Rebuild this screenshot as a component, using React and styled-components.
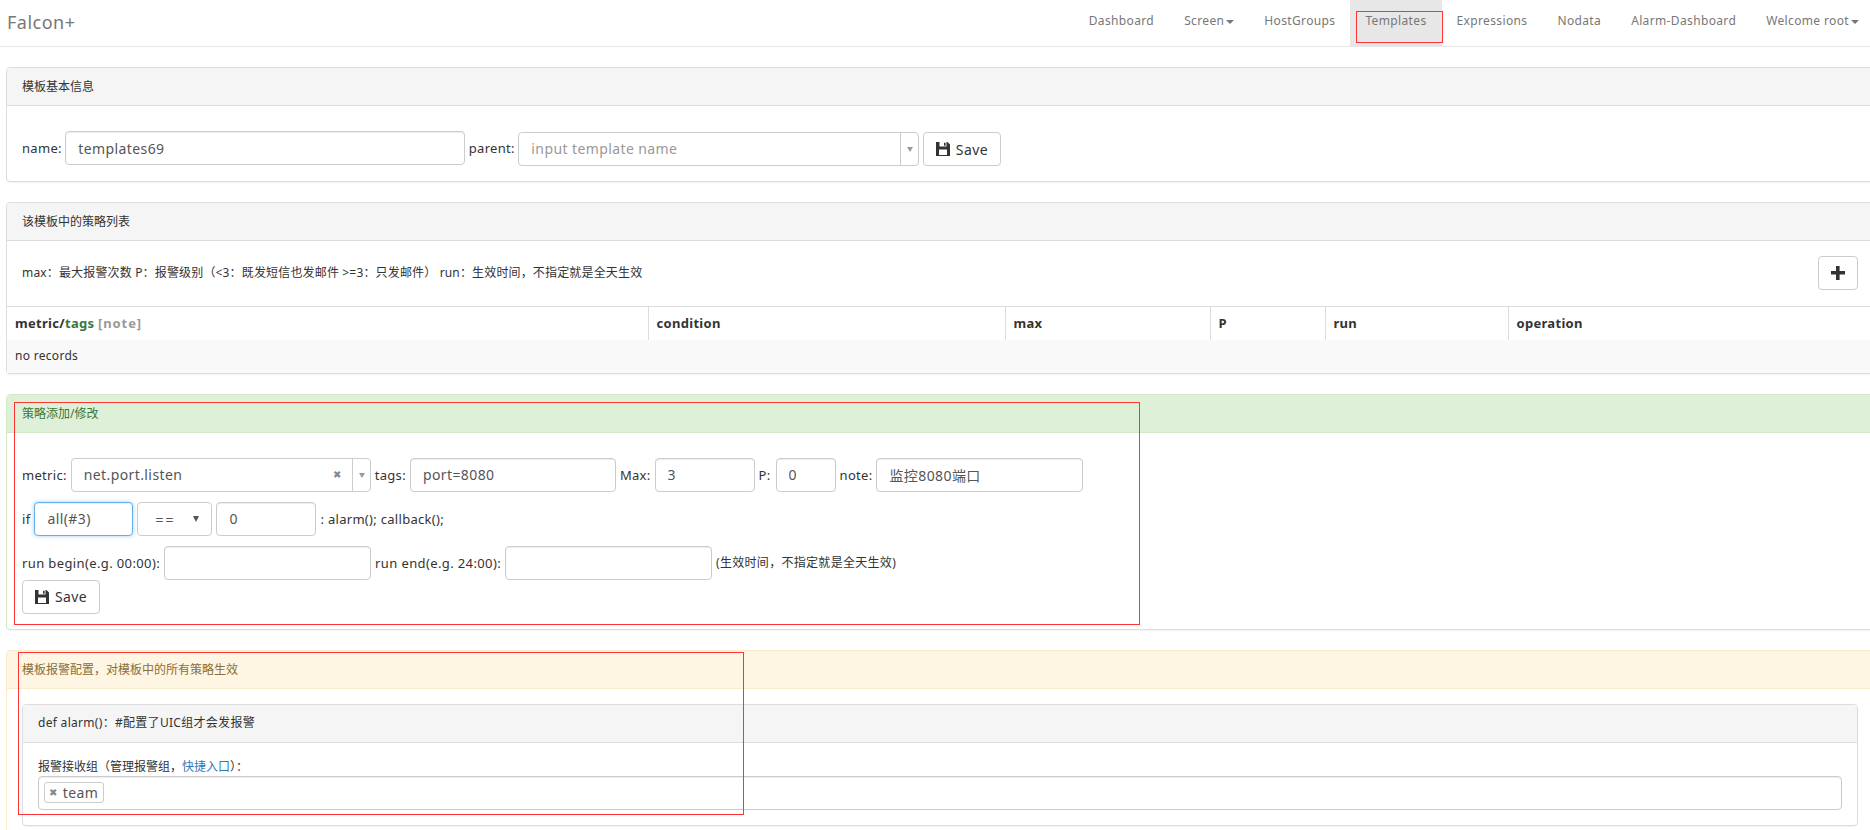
import React from "react";
import styled, { createGlobalStyle } from "styled-components";

const SANS = `"Noto Sans", "Noto Sans CJK SC", sans-serif`;

const GlobalStyle = createGlobalStyle`
  html, body {
    margin: 0;
    overflow: hidden;
  }
  body {
    background: #fff;
    color: #333;
    font-family: ${SANS};
    font-size: 12px;
    line-height: 18px;
  }
  * {
    box-sizing: border-box;
  }
`;

const NAV_ITEMS = [
  { label: "Dashboard" },
  { label: "Screen", caret: true },
  { label: "HostGroups" },
  { label: "Templates", active: true },
  { label: "Expressions" },
  { label: "Nodata" },
  { label: "Alarm-Dashboard" },
  { label: "Welcome root", caret: true },
];

const COLUMNS = [
  { label: "condition", width: 357 },
  { label: "max", width: 205 },
  { label: "P", width: 115 },
  { label: "run", width: 183 },
  { label: "operation" },
];

const SaveIcon = () => (
  <svg width="14" height="14" viewBox="0 0 14 14" aria-hidden="true">
    <path
      fill="#333"
      fillRule="evenodd"
      d="M0 0h11.5L14 2.5V14H0zM3.5 0v4.5h7V0zM8 .8h1.6v3H8zM3 7.5h8V13H3z"
    />
  </svg>
);

const PlusIcon = () => (
  <svg width="14" height="14" viewBox="0 0 14 14" aria-hidden="true">
    <path fill="#333" d="M5 0h3.6v5H14v3.6H8.6V14H5V8.6H0V5h5z" />
  </svg>
);

const SaveButton = () => (
  <Button>
    <SaveIcon />
    Save
  </Button>
);

const Metric = ({ value, placeholder, clearable, width }) => (
  <Combo $width={width}>
    {value ? <ComboValue>{value}</ComboValue> : <ComboHint>{placeholder}</ComboHint>}
    {clearable && <ComboClear>✖</ComboClear>}
    <ComboArrow />
  </Combo>
);

const App = () => (
  <Page>
    <GlobalStyle />
    <Navbar>
      <Brand>Falcon+</Brand>
      <NavList>
        {NAV_ITEMS.map((item) => (
          <NavLink key={item.label} $active={item.active}>
            {item.label}
            {item.caret && <NavCaret />}
            {item.active && <TemplatesMark />}
          </NavLink>
        ))}
      </NavList>
    </Navbar>

    <Content>
      <Panel>
        <PanelHeading>模板基本信息</PanelHeading>
        <PanelBody $top={25}>
          <BasicRow>
            <FieldLabel>name:</FieldLabel>
            <TextInput $width={400} defaultValue="templates69" />
            <FieldLabel>parent:</FieldLabel>
            <Metric placeholder="input template name" width={401} />
            <SaveButton />
          </BasicRow>
        </PanelBody>
      </Panel>

      <Panel>
        <PanelHeading>该模板中的策略列表</PanelHeading>
        <PanelBody $bottom={16}>
          <LegendRow>
            <LegendText>
              max：最大报警次数 P：报警级别（&lt;3：既发短信也发邮件 &gt;=3：只发邮件） run：生效时间，不指定就是全天生效
            </LegendText>
            <IconButton>
              <PlusIcon />
            </IconButton>
          </LegendRow>
        </PanelBody>
        <Table>
          <thead>
            <tr>
              <HeadCell $width={641}>
                metric/<TagsText>tags</TagsText> <NoteText>[note]</NoteText>
              </HeadCell>
              {COLUMNS.map((col) => (
                <HeadCell key={col.label} $width={col.width}>
                  {col.label}
                </HeadCell>
              ))}
            </tr>
          </thead>
          <tbody>
            <tr>
              <BodyCell colSpan={6}>no records</BodyCell>
            </tr>
          </tbody>
        </Table>
      </Panel>

      <Panel $tone="success">
        <PolicyMark />
        <PanelHeading $tone="success">策略添加/修改</PanelHeading>
        <PanelBody $top={25}>
          <FormStack>
            <FormRow>
              <FieldLabel>metric:</FieldLabel>
              <Metric value="net.port.listen" clearable width={300} />
              <FieldLabel>tags:</FieldLabel>
              <TextInput $width={206} defaultValue="port=8080" />
              <FieldLabel>Max:</FieldLabel>
              <TextInput $width={100} defaultValue="3" />
              <PLabel>P:</PLabel>
              <TextInput $width={60} defaultValue="0" />
              <FieldLabel>note:</FieldLabel>
              <TextInput $width={207} defaultValue="监控8080端口" />
            </FormRow>
            <FormRow>
              <FieldLabel>if</FieldLabel>
              <TextInput $width={99} $focused defaultValue="all(#3)" />
              <SelectBox>
                ==
                <SelectCaret />
              </SelectBox>
              <TextInput $width={100} defaultValue="0" />
              <FieldLabel>: alarm(); callback();</FieldLabel>
            </FormRow>
            <FormRow>
              <RunLabel>run begin(e.g. 00:00):</RunLabel>
              <TextInput $width={207} />
              <RunLabel>run end(e.g. 24:00):</RunLabel>
              <TextInput $width={207} />
              <HintLabel>(生效时间，不指定就是全天生效)</HintLabel>
            </FormRow>
          </FormStack>
          <SaveButton />
        </PanelBody>
      </Panel>

      <Panel $tone="warning">
        <AlarmMark />
        <PanelHeading $tone="warning">模板报警配置，对模板中的所有策略生效</PanelHeading>
        <PanelBody>
          <Panel $flush>
            <InnerHeading>def alarm()：#配置了UIC组才会发报警</InnerHeading>
            <PanelBody>
              <GroupLabel>
                报警接收组（管理报警组，<GroupLink>快捷入口</GroupLink>）：
              </GroupLabel>
              <TagBox>
                <Tag>
                  <TagRemove>✖</TagRemove>
                  team
                </Tag>
              </TagBox>
            </PanelBody>
          </Panel>
        </PanelBody>
      </Panel>
    </Content>
  </Page>
);

const TONES = {
  default: { border: "#ddd", bg: "#f5f5f5", text: "#333" },
  success: { border: "#d6e9c6", bg: "#dff0d8", text: "#3c763d" },
  warning: { border: "#faebcc", bg: "#fef6e2", text: "#8a6d3b" },
};

const toneOf = (props) => TONES[props.$tone] || TONES.default;

const Page = styled.div`
  height: 830px;
  margin-right: -4px;
  overflow: hidden;
`;

const Navbar = styled.nav`
  display: flex;
  justify-content: space-between;
  height: 47px;
  border-bottom: 1px solid #e7e7e7;
`;

const Brand = styled.a`
  padding: 12px 0 0 7px;
  color: #777;
  font-size: 18px;
  letter-spacing: 0.5px;
  line-height: 20px;
`;

const NavList = styled.div`
  display: flex;
`;

const NavLink = styled.a`
  position: relative;
  display: flex;
  align-items: flex-start;
  height: 46px;
  padding: 12px 15px 0;
  color: #777;
  background: ${(props) => (props.$active ? "#e7e7e7" : "transparent")};
  font-size: 12px;
  letter-spacing: 0.36px;
  line-height: 18px;
`;

const NavCaret = styled.span`
  align-self: center;
  margin: -14px 0 0 2px;
  border-top: 4px solid #777;
  border-left: 4px solid transparent;
  border-right: 4px solid transparent;
`;

const TemplatesMark = styled.span`
  position: absolute;
  top: 11px;
  left: 6px;
  width: 87px;
  height: 32px;
  border: 1px solid #f33;
`;

const Content = styled.main`
  padding: 20px 0 0 6px;
`;

const Panel = styled.section`
  position: relative;
  margin-bottom: ${(props) => (props.$flush ? "0" : "20px")};
  background: #fff;
  border: 1px solid ${(props) => toneOf(props).border};
  border-radius: 4px;
  box-shadow: 0 1px 1px rgba(0, 0, 0, 0.05);
`;

const PanelHeading = styled.div`
  height: 38px;
  padding: 10px 15px;
  color: ${(props) => toneOf(props).text};
  background: ${(props) => toneOf(props).bg};
  border-bottom: 1px solid ${(props) => toneOf(props).border};
  border-radius: 3px 3px 0 0;
`;

const InnerHeading = styled(PanelHeading)`
  padding-top: 9px;
  letter-spacing: 0.3px;
`;

const PanelBody = styled.div`
  padding: ${(props) => props.$top || 15}px 15px ${(props) => props.$bottom || 15}px;
`;

const FormStack = styled.div`
  display: flex;
  flex-direction: column;
  gap: 10px;
`;

const FormRow = styled.div`
  display: flex;
  align-items: center;
  gap: 4px;
`;

// the parent picker and its button sit a pixel lower than the name input
const BasicRow = styled(FormRow)`
  align-items: flex-start;
  gap: 3.5px;

  & > label {
    margin-top: 8px;
  }
  & > div,
  & > button {
    margin-top: 1px;
  }
`;

const LegendRow = styled.div`
  display: flex;
  align-items: center;
  justify-content: space-between;
`;

const LegendText = styled.span`
  letter-spacing: 0.16px;
`;

const FieldLabel = styled.label`
  font-size: 13px;
  letter-spacing: 0.3px;
  white-space: nowrap;
`;

const PLabel = styled(FieldLabel)`
  margin-right: 1px;
`;

const RunLabel = styled(FieldLabel)`
  letter-spacing: 0.38px;
`;

const HintLabel = styled.label`
  letter-spacing: 0.3px;
  white-space: nowrap;
`;

const TextInput = styled.input`
  width: ${(props) => props.$width}px;
  height: 34px;
  padding: 6px 12px;
  color: #555;
  background: #fff;
  border: 1px solid ${(props) => (props.$focused ? "#66afe9" : "#ccc")};
  border-radius: 4px;
  box-shadow: ${(props) =>
    props.$focused
      ? "inset 0 1px 1px rgba(0,0,0,.075), 0 0 4px rgba(102,175,233,.6)"
      : "inset 0 1px 1px rgba(0,0,0,.075)"};
  font-family: ${SANS};
  font-size: 14px;
  letter-spacing: 0.4px;
  outline: none;
`;

const Combo = styled.div`
  position: relative;
  display: flex;
  align-items: center;
  width: ${(props) => props.$width}px;
  height: 34px;
  padding: 0 0 0 12px;
  background: #fff;
  border: 1px solid #ccc;
  border-radius: 4px;
  font-size: 14px;
  letter-spacing: 0.4px;
`;

const ComboValue = styled.span`
  flex: 1;
  color: #555;
`;

const ComboHint = styled.span`
  flex: 1;
  color: #999;
`;

const ComboClear = styled.span`
  margin-right: 10px;
  color: #888;
  font-family: "DejaVu Sans", sans-serif;
  font-size: 10px;
`;

const ComboArrow = styled.span`
  position: relative;
  align-self: stretch;
  flex: none;
  width: 18px;
  border-left: 1px solid #ccc;

  &::after {
    content: "";
    position: absolute;
    top: 14px;
    left: 6px;
    border-top: 5px solid #999;
    border-left: 3px solid transparent;
    border-right: 3px solid transparent;
  }
`;

const SelectBox = styled.div`
  position: relative;
  width: 75px;
  height: 34px;
  padding: 0 0 0 17px;
  color: #555;
  background: #fff;
  border: 1px solid #ccc;
  border-radius: 4px;
  font-size: 14px;
  letter-spacing: 2px;
  line-height: 34px;
`;

const SelectCaret = styled.span`
  position: absolute;
  top: 13px;
  right: 12px;
  border-top: 6px solid #555;
  border-left: 3px solid transparent;
  border-right: 3px solid transparent;
`;

const Button = styled.button`
  display: inline-flex;
  align-items: center;
  gap: 6px;
  height: 34px;
  padding: 0 12px;
  color: #333;
  background: #fff;
  border: 1px solid #ccc;
  border-radius: 4px;
  font-family: ${SANS};
  font-size: 14px;
  letter-spacing: 0.4px;
`;

const IconButton = styled(Button)`
  justify-content: center;
  width: 40px;
  padding: 0;
`;

const Table = styled.table`
  width: 100%;
  border-collapse: collapse;
  table-layout: fixed;
`;

const HeadCell = styled.th`
  width: ${(props) => (props.$width ? `${props.$width}px` : "auto")};
  height: 33px;
  padding: 0 8px;
  border-top: 1px solid #ddd;
  border-left: 1px solid #ddd;
  text-align: left;
  font-size: 13px;
  font-weight: 700;
  letter-spacing: 0.3px;

  &:first-child {
    border-left: 0;
  }
`;

const TagsText = styled.span`
  color: #3c763d;
`;

const NoteText = styled.span`
  color: #999;
  letter-spacing: 0.9px;
`;

const BodyCell = styled.td`
  height: 33px;
  padding: 0 8px;
  background: #f9f9f9;
  letter-spacing: 0.3px;
`;

const GroupLabel = styled.div``;

const GroupLink = styled.a`
  color: #337ab7;
`;

const TagBox = styled.div`
  display: flex;
  align-items: center;
  height: 34px;
  padding: 0 5px;
  border: 1px solid #ccc;
  border-radius: 4px;
  box-shadow: inset 0 1px 1px rgba(0, 0, 0, 0.075);
`;

const Tag = styled.span`
  display: flex;
  align-items: center;
  gap: 5px;
  height: 21px;
  padding: 0 5px 0 4px;
  color: #555;
  border: 1px solid #ccc;
  border-radius: 3px;
  font-size: 14px;
  letter-spacing: 0.4px;
`;

const TagRemove = styled.span`
  color: #888;
  font-family: "DejaVu Sans", sans-serif;
  font-size: 10px;
`;

const PolicyMark = styled.div`
  position: absolute;
  top: 7px;
  left: 7px;
  width: 1126px;
  height: 223px;
  border: 1px solid #f33;
  pointer-events: none;
`;

const AlarmMark = styled.div`
  position: absolute;
  top: 1px;
  left: 11px;
  width: 726px;
  height: 163px;
  border: 1px solid #f33;
  pointer-events: none;
  z-index: 1;
`;

export default App;
